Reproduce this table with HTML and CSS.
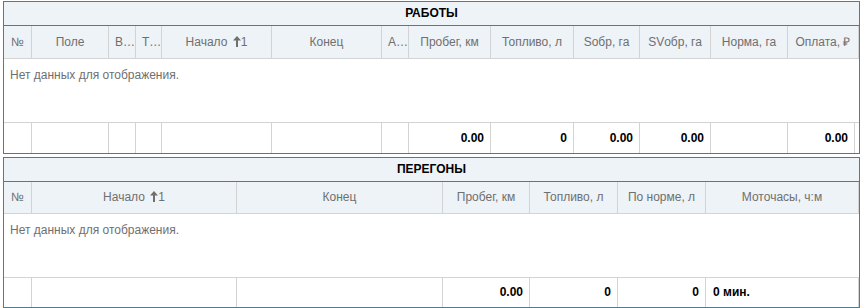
FILE: index.html
```html
<!DOCTYPE html>
<html lang="ru">

<head>
    <meta charset="UTF-8">
    <title>Работы и перегоны</title>
    <link rel="stylesheet" href="styles.css">
</head>

<body>
    <!-- Работы -->
    <div class="panel panel-works">
        <div class="panel-title">РАБОТЫ</div>
        <div class="grid-row grid-head">
            <div class="cell">№</div>
            <div class="cell">Поле</div>
            <div class="cell cut">В…</div>
            <div class="cell cut">Т…</div>
            <div class="cell">Начало <svg class="sort" width="8" height="11" viewBox="0 0 8 11"><path d="M4 0 L8 4.5 H5 V11 H3 V4.5 H0 Z"/></svg>1</div>
            <div class="cell">Конец</div>
            <div class="cell cut">А…</div>
            <div class="cell">Пробег, км</div>
            <div class="cell">Топливо, л</div>
            <div class="cell">Sобр, га</div>
            <div class="cell">SVобр, га</div>
            <div class="cell">Норма, га</div>
            <div class="cell">Оплата, ₽</div>
        </div>
        <div class="grid-empty">Нет данных для отображения.</div>
        <div class="grid-row grid-foot foot-short">
            <div class="cell"></div>
            <div class="cell"></div>
            <div class="cell"></div>
            <div class="cell"></div>
            <div class="cell"></div>
            <div class="cell"></div>
            <div class="cell"></div>
            <div class="cell num">0.00</div>
            <div class="cell num">0</div>
            <div class="cell num">0.00</div>
            <div class="cell num">0.00</div>
            <div class="cell"></div>
            <div class="cell num">0.00</div>
        </div>
    </div>

    <!-- Перегоны -->
    <div class="panel panel-moves">
        <div class="panel-title">ПЕРЕГОНЫ</div>
        <div class="grid-row grid-head">
            <div class="cell">№</div>
            <div class="cell">Начало <svg class="sort" width="8" height="11" viewBox="0 0 8 11"><path d="M4 0 L8 4.5 H5 V11 H3 V4.5 H0 Z"/></svg>1</div>
            <div class="cell">Конец</div>
            <div class="cell">Пробег, км</div>
            <div class="cell">Топливо, л</div>
            <div class="cell">По норме, л</div>
            <div class="cell">Моточасы, ч:м</div>
        </div>
        <div class="grid-empty">Нет данных для отображения.</div>
        <div class="grid-row grid-foot">
            <div class="cell"></div>
            <div class="cell"></div>
            <div class="cell"></div>
            <div class="cell num">0.00</div>
            <div class="cell num">0</div>
            <div class="cell num">0</div>
            <div class="cell txt">0 мин.</div>
        </div>
    </div>
</body>

</html>
```

FILE: styles.css
```css
:root {
    --frame: #2589bd;
    --head-bg: #eef3f7;
    --line: #d3d3d3;
    --muted: #6f6f6f;
}

* {
    box-sizing: border-box;
}

body {
    margin: 0;
    padding: 1px 1px 0 3px;
    font-family: "Liberation Sans", Arial, sans-serif;
    font-size: 12px;
    color: #000;
    background: #fff;
}

.panel {
    border: 1px solid var(--frame);
    background: #fff;
}

.panel + .panel {
    margin-top: 3px;
}

.panel-title {
    height: 24px;
    line-height: 23px;
    text-align: center;
    font-weight: bold;
    background: var(--head-bg);
    border-bottom: 1px solid var(--frame);
}

/* колонки таблиц */
.panel-works .grid-row {
    grid-template-columns: 28px 77px 27px 26px 110px 110px 27px 82px 83px 66px 71px 77px 1fr;
}

.panel-moves .grid-row {
    grid-template-columns: 28px 205px 206px 87px 88px 88px 1fr;
}

.grid-row {
    display: grid;
}

.cell {
    border-right: 1px solid var(--line);
    padding: 0 6px;
    white-space: nowrap;
    overflow: hidden;
}

.grid-head {
    height: 33px;
    background: var(--head-bg);
    border-bottom: 1px solid var(--line);
    color: var(--muted);
}

.grid-head .cell {
    text-align: center;
    line-height: 32px;
}

.grid-head .cut {
    text-align: left;
    padding: 0 0 0 6px;
}

.sort {
    fill: var(--muted);
    vertical-align: -1px;
    margin-left: 2px;
}

.grid-empty {
    height: 64px;
    padding: 9px 0 0 6px;
    color: var(--muted);
    border-bottom: 1px solid var(--line);
}

.grid-foot {
    height: 30px;
    font-weight: bold;
}

.grid-foot .cell {
    line-height: 30px;
}

.foot-short {
    padding-right: 4px;
}

.panel-moves .grid-head {
    height: 32px;
}

.panel-moves .grid-head .cell {
    line-height: 31px;
}

.panel-moves .grid-foot {
    height: 29px;
}

.panel-moves .grid-foot .cell {
    line-height: 29px;
}

.num {
    text-align: right;
}

.txt {
    text-align: left;
    padding-left: 7px;
}
```
